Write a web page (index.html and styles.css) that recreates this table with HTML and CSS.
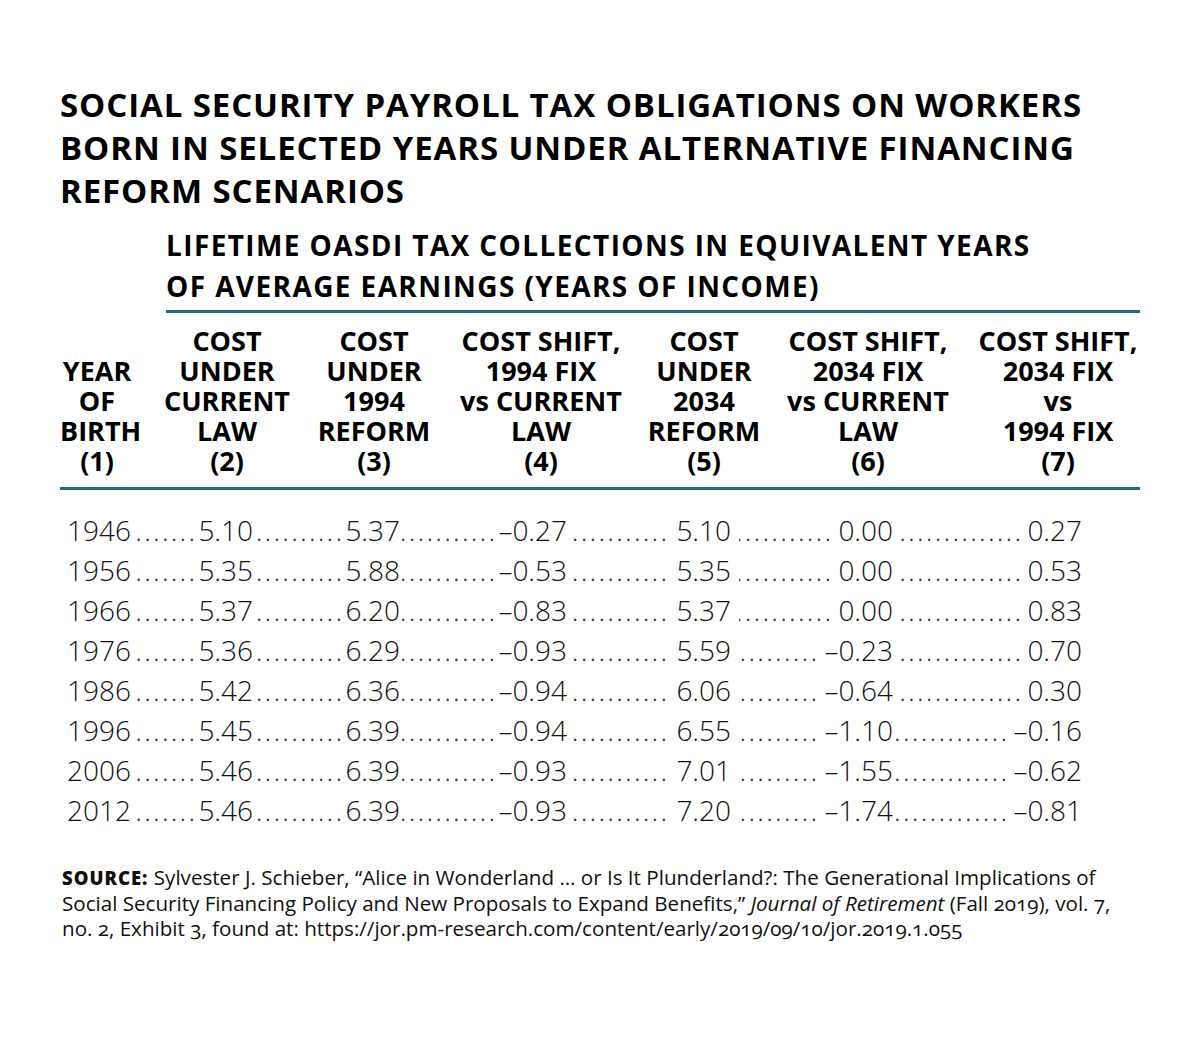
FILE: index.html
```html
<!DOCTYPE html>
<html lang="en">
<head>
<meta charset="utf-8">
<title>Social Security Payroll Tax Obligations</title>
<link rel="stylesheet" href="styles.css">
</head>
<body>
<main class="page">
  <h1 class="title">SOCIAL SECURITY PAYROLL TAX OBLIGATIONS ON WORKERS BORN IN SELECTED YEARS UNDER ALTERNATIVE FINANCING REFORM SCENARIOS</h1>
  <h2 class="subtitle">LIFETIME OASDI TAX COLLECTIONS IN EQUIVALENT YEARS<br>OF AVERAGE EARNINGS (YEARS OF INCOME)</h2>
  <div class="rule rule-short"></div>
  <div class="head">
    <div class="hc hc1">YEAR<br>OF<br>BIRTH<br>(1)</div>
    <div class="hc">COST<br>UNDER<br>CURRENT<br>LAW<br>(2)</div>
    <div class="hc">COST<br>UNDER<br>1994<br>REFORM<br>(3)</div>
    <div class="hc">COST SHIFT,<br>1994 FIX<br>vs CURRENT<br>LAW<br>(4)</div>
    <div class="hc">COST<br>UNDER<br>2034<br>REFORM<br>(5)</div>
    <div class="hc">COST SHIFT,<br>2034 FIX<br>vs CURRENT<br>LAW<br>(6)</div>
    <div class="hc hc7">COST SHIFT,<br>2034 FIX<br>vs<br>1994 FIX<br>(7)</div>
  </div>
  <div class="rule"></div>
  <div class="data">
    <div class="row"><span class="yr">1946</span><span class="c c2"><i class="lead"></i><span>5.10</span></span><span class="c c3"><i class="lead"></i><span>5.37</span></span><span class="c c4"><i class="lead"></i><span>–0.27</span></span><span class="c c5"><i class="lead"></i><span>5.10</span></span><span class="c c6"><i class="lead"></i><span>0.00</span></span><span class="c c7"><i class="lead"></i><span>0.27</span></span></div>
    <div class="row"><span class="yr">1956</span><span class="c c2"><i class="lead"></i><span>5.35</span></span><span class="c c3"><i class="lead"></i><span>5.88</span></span><span class="c c4"><i class="lead"></i><span>–0.53</span></span><span class="c c5"><i class="lead"></i><span>5.35</span></span><span class="c c6"><i class="lead"></i><span>0.00</span></span><span class="c c7"><i class="lead"></i><span>0.53</span></span></div>
    <div class="row"><span class="yr">1966</span><span class="c c2"><i class="lead"></i><span>5.37</span></span><span class="c c3"><i class="lead"></i><span>6.20</span></span><span class="c c4"><i class="lead"></i><span>–0.83</span></span><span class="c c5"><i class="lead"></i><span>5.37</span></span><span class="c c6"><i class="lead"></i><span>0.00</span></span><span class="c c7"><i class="lead"></i><span>0.83</span></span></div>
    <div class="row"><span class="yr">1976</span><span class="c c2"><i class="lead"></i><span>5.36</span></span><span class="c c3"><i class="lead"></i><span>6.29</span></span><span class="c c4"><i class="lead"></i><span>–0.93</span></span><span class="c c5"><i class="lead"></i><span>5.59</span></span><span class="c c6"><i class="lead"></i><span>–0.23</span></span><span class="c c7"><i class="lead"></i><span>0.70</span></span></div>
    <div class="row"><span class="yr">1986</span><span class="c c2"><i class="lead"></i><span>5.42</span></span><span class="c c3"><i class="lead"></i><span>6.36</span></span><span class="c c4"><i class="lead"></i><span>–0.94</span></span><span class="c c5"><i class="lead"></i><span>6.06</span></span><span class="c c6"><i class="lead"></i><span>–0.64</span></span><span class="c c7"><i class="lead"></i><span>0.30</span></span></div>
    <div class="row"><span class="yr">1996</span><span class="c c2"><i class="lead"></i><span>5.45</span></span><span class="c c3"><i class="lead"></i><span>6.39</span></span><span class="c c4"><i class="lead"></i><span>–0.94</span></span><span class="c c5"><i class="lead"></i><span>6.55</span></span><span class="c c6"><i class="lead"></i><span>–1.10</span></span><span class="c c7"><i class="lead"></i><span>–0.16</span></span></div>
    <div class="row"><span class="yr">2006</span><span class="c c2"><i class="lead"></i><span>5.46</span></span><span class="c c3"><i class="lead"></i><span>6.39</span></span><span class="c c4"><i class="lead"></i><span>–0.93</span></span><span class="c c5"><i class="lead"></i><span>7.01</span></span><span class="c c6"><i class="lead"></i><span>–1.55</span></span><span class="c c7"><i class="lead"></i><span>–0.62</span></span></div>
    <div class="row"><span class="yr">2012</span><span class="c c2"><i class="lead"></i><span>5.46</span></span><span class="c c3"><i class="lead"></i><span>6.39</span></span><span class="c c4"><i class="lead"></i><span>–0.93</span></span><span class="c c5"><i class="lead"></i><span>7.20</span></span><span class="c c6"><i class="lead"></i><span>–1.74</span></span><span class="c c7"><i class="lead"></i><span>–0.81</span></span></div>
  </div>
  <p class="source"><b class="src-label">SOURCE:</b> Sylvester J. Schieber, “Alice in Wonderland … or Is It Plunderland?: The Generational Implications of<br>Social Security Financing Policy and New Proposals to Expand Benefits,” <em>Journal of Retirement</em> (Fall 2019), vol. 7,<br>no. 2, Exhibit 3, found at: https://jor.pm-research.com/content/early/2019/09/10/jor.2019.1.055</p>
</main>
</body>
</html>
```

FILE: styles.css
```css
* { box-sizing: border-box; }
html, body { margin: 0; padding: 0; background: #fff; }
body { color: #111; font-family: "Open Sans", "Noto Sans", sans-serif; }

.page {
  width: 1200px;
  padding: 83px 60px 0 60px;
}

.title {
  margin: 0;
  width: 1040px;
  font-size: 33px;
  line-height: 43px;
  font-weight: 700;
  letter-spacing: 0.9px;
  color: #000;
}

.subtitle {
  margin: 13px 0 0 106px;
  font-size: 28px;
  line-height: 41px;
  font-weight: 700;
  letter-spacing: 1.4px;
  color: #000;
}

.rule {
  height: 3px;
  background: #2b6586;
}
.rule-short { margin: 3px 0 0 106px; }

.head {
  display: grid;
  grid-template-columns: 88px 158px 136px 198px 128px 200px 172px;
  align-items: end;
  margin: 13px 0 11px;
  font-size: 27px;
  line-height: 30px;
  font-weight: 700;
  color: #000;
  text-align: center;
  white-space: nowrap;
}
.hc1 { padding-right: 14px; }
.hc7 { padding-left: 8px; }

.data {
  margin-top: 20px;
  font-size: 28px;
  line-height: 40px;
  font-weight: 300;
  color: #111;
}
.row {
  display: grid;
  grid-template-columns: 70px 123px 147px 167px 164px 162px 189px;
  white-space: nowrap;
}
.yr { padding-left: 7px; }
.c { display: flex; }
.lead {
  flex: 1;
  min-width: 0;
  overflow: hidden;
  direction: rtl;
  font-style: normal;
  letter-spacing: 2.2px;
  color: #333;
  margin: 0 1px 0 2px;
}
.lead::before { content: "................................................"; }
.c5 .lead { margin: 0 7px 0 5px; }
.c6 .lead { margin: 0 5px 0 8px; }
.c7 .lead { margin: 0 4px 0 3px; }

.source {
  margin: 35px 0 0 2px;
  font-size: 20.6px;
  line-height: 25.5px;
  color: #111;
  font-variant-numeric: oldstyle-nums;
  white-space: nowrap;
}
.src-label {
  font-size: 18.5px;
  letter-spacing: 1px;
  font-weight: 800;
}
.source em { font-style: italic; }
```
